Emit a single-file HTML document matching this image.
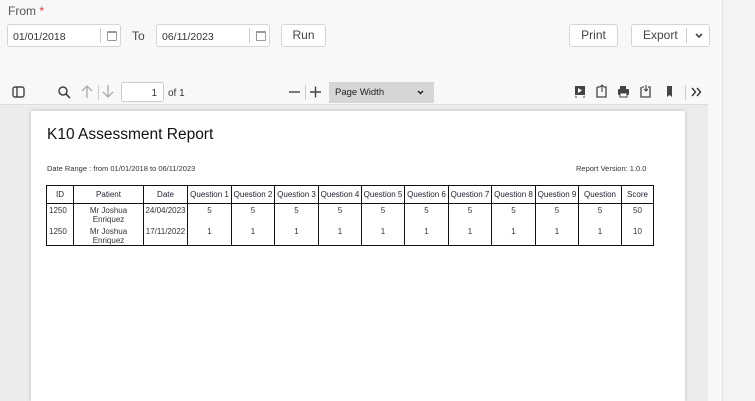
<!DOCTYPE html>
<html><head><meta charset="utf-8"><style>
*{box-sizing:border-box;margin:0;padding:0}
body{width:755px;height:401px;overflow:hidden;background:#f8f8f8;font-family:"Liberation Sans",sans-serif;position:relative;color:#333}
.abs{position:absolute}
.lbl{left:8px;top:4px;font-size:12px;color:#555}
.inp{height:23px;border:1px solid #d5d5d5;border-radius:3px;background:#fff;font-size:10.5px;color:#333;padding:6px 0 0 5px}
.btn{height:23px;border:1px solid #d5d5d5;border-radius:3px;background:#fff;font-size:12px;color:#444;text-align:center;line-height:21px}
.cal{position:absolute;right:0;top:3px;width:20px;height:15px;border-left:1px solid #ccc}
.cal:after{content:"";position:absolute;left:6px;top:3px;width:8px;height:7px;border:1px solid #999;border-top-width:2px;border-radius:1px}
.viewer{left:0;top:104px;width:708px;height:297px;background:#ececec;border-top:1px solid #ddd}
.page{left:31px;top:111px;width:654px;height:290px;background:#fff;box-shadow:0 0 4px rgba(0,0,0,.2)}
table{position:absolute;left:46px;top:185px;border-collapse:collapse;font-size:8px;color:#333;border:1.5px solid #111}
td{border-left:1px solid #111;border-right:1px solid #111;text-align:center;padding:0;line-height:9px;vertical-align:top}
tr.h td{height:18px;vertical-align:middle;color:#223;border-bottom:1px solid #111}
tr.r td{height:21px;padding-top:2px}
.ic{fill:#444}
</style></head><body>
<div class="abs lbl">From <span style="color:#e33">*</span></div>
<div class="abs inp" style="left:7px;top:24px;width:114px">01/01/2018<div class="cal"></div></div>
<div class="abs" style="left:132px;top:29px;font-size:12px;color:#444">To</div>
<div class="abs inp" style="left:156px;top:24px;width:114px">06/11/2023<div class="cal"></div></div>
<div class="abs btn" style="left:281px;top:24px;width:45px">Run</div>
<div class="abs btn" style="left:569px;top:24px;width:49px">Print</div>
<div class="abs btn" style="left:631px;top:24px;width:79px;text-align:left;padding-left:11px">Export<span style="position:absolute;left:54px;top:3px;height:15px;border-left:1px solid #ccc"></span><svg style="position:absolute;left:63px;top:8px" width="8" height="6"><path d="M1 1l3 3 3-3" fill="none" stroke="#444" stroke-width="1.6"/></svg></div>
<div class="abs" style="left:722px;top:0;width:33px;height:401px;background:#f3f3f3;border-left:1px solid #e2e2e2"></div>

<svg class="abs" style="left:0;top:82px" width="708" height="22">
<rect x="13" y="5" width="11" height="10" rx="2" fill="none" stroke="#444" stroke-width="1.4"/><line x1="17" y1="5" x2="17" y2="15" stroke="#444" stroke-width="1.4"/>
<circle cx="63" cy="9" r="4" fill="none" stroke="#444" stroke-width="1.5"/><line x1="66" y1="12" x2="70" y2="16" stroke="#444" stroke-width="1.6"/>
<path d="M87 16V4M82 9l5-5 5 5" fill="none" stroke="#aaa" stroke-width="1.3"/>
<line x1="98.5" y1="3" x2="98.5" y2="18" stroke="#ccc"/>
<path d="M108 3v12M103 10l5 5 5-5" fill="none" stroke="#aaa" stroke-width="1.3"/>
<rect x="121.5" y="0.5" width="42" height="19" fill="#fff" stroke="#ccc" rx="2"/>
<text x="157" y="14" font-size="10" text-anchor="end" fill="#333">1</text>
<text x="168" y="14" font-size="10" fill="#333">of 1</text>
<line x1="289" y1="10" x2="300" y2="10" stroke="#444" stroke-width="1.4"/>
<line x1="305.5" y1="3" x2="305.5" y2="18" stroke="#ccc"/>
<path d="M310 10h11M315.5 4.5v11" stroke="#444" stroke-width="1.4"/>
<rect x="329" y="0" width="105" height="21" fill="#d6d6d6"/>
<text x="335" y="13" font-size="9.5" fill="#222">Page Width</text>
<path d="M418 9l2.5 2.5 2.5-2.5" fill="none" stroke="#222" stroke-width="1.5"/>
<rect x="575" y="4" width="10" height="9" class="ic"/><path d="M578 6v5l4-2.5z" fill="#fff"/><path d="M576 14v2M584 14v2" stroke="#444"/>
<path d="M597 5h3M604 5h2v10h-9V5" fill="none" stroke="#444" stroke-width="1.3"/><path d="M602 10V3M600 5l2-2 2 2" fill="none" stroke="#444" stroke-width="1.1"/>
<rect x="620" y="4" width="6" height="3" class="ic"/><rect x="618" y="7" width="11" height="6" rx="1" class="ic"/><rect x="620" y="11" width="7" height="4" fill="#fff" stroke="#444"/>
<path d="M642 5h2M648 5h2v10h-9V5" fill="none" stroke="#444" stroke-width="1.3"/><path d="M646 3v6M644 7l2 2 2-2" fill="none" stroke="#444" stroke-width="1.1"/>
<path d="M667 4h5v11l-2.5-2-2.5 2z" class="ic"/>
<line x1="685.5" y1="3" x2="685.5" y2="18" stroke="#ccc"/>
<path d="M692 6l3.5 4-3.5 4M697 6l3.5 4-3.5 4" fill="none" stroke="#333" stroke-width="1.4"/>
</svg>

<div class="abs viewer"></div>
<div class="abs page"></div>
<div class="abs" style="left:47px;top:126px;font-size:15.5px;color:#111">K10 Assessment Report</div>
<div class="abs" style="left:47px;top:164px;font-size:7.5px;color:#333">Date Range : from 01/01/2018 to 06/11/2023</div>
<div class="abs" style="left:576px;top:164px;font-size:7.5px;color:#333">Report Version: 1.0.0</div>
<table>
<tr class="h"><td style="width:27px">ID</td><td style="width:70px">Patient</td><td style="width:44px">Date</td><td style="width:44px">Question 1</td><td style="width:43px">Question 2</td><td style="width:44px">Question 3</td><td style="width:43px">Question 4</td><td style="width:43px">Question 5</td><td style="width:44px">Question 6</td><td style="width:43px">Question 7</td><td style="width:44px">Question 8</td><td style="width:43px">Question 9</td><td style="width:43px">Question</td><td style="width:32px">Score</td></tr>
<tr class="r"><td style="text-align:left;padding-left:2px">1250</td><td>Mr Joshua<br>Enriquez</td><td>24/04/2023</td><td>5</td><td>5</td><td>5</td><td>5</td><td>5</td><td>5</td><td>5</td><td>5</td><td>5</td><td>5</td><td>50</td></tr>
<tr class="r"><td style="text-align:left;padding-left:2px">1250</td><td>Mr Joshua<br>Enriquez</td><td>17/11/2022</td><td>1</td><td>1</td><td>1</td><td>1</td><td>1</td><td>1</td><td>1</td><td>1</td><td>1</td><td>1</td><td>10</td></tr>
</table>
</body></html>
